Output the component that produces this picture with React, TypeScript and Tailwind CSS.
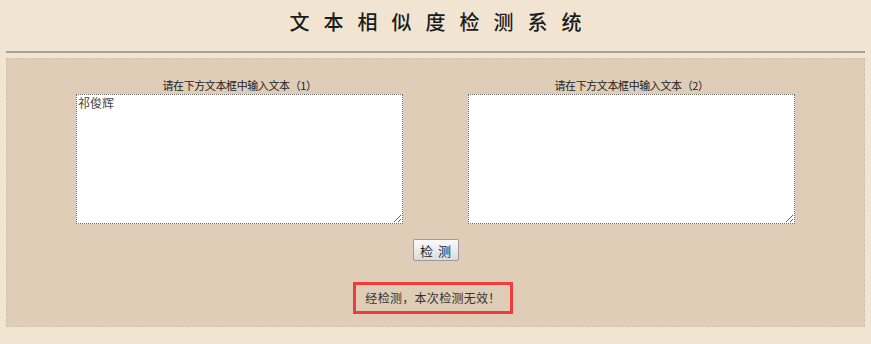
import { useState } from "react";

const cjk = { fontFamily: '"Noto Sans CJK SC", "Liberation Sans", sans-serif' };

export default function App() {
  const [left, setLeft] = useState("祁俊辉");
  const [right, setRight] = useState("");

  return (
    <div className="min-h-screen bg-[#f1e5d1] text-[#333]" style={cjk}>
      {/* header */}
      <div className="pt-[8px] pb-[15px] text-center">
        <h1 className="pl-[14px] text-[20px] leading-[28px] font-medium tracking-[14px] text-[#1c1c1c]">
          文本相似度检测系统
        </h1>
      </div>
      <div className="mx-[6px] h-[2px] bg-[#9ea2a2]" />

      {/* main panel */}
      <div className="mx-[6px] mt-[5px] border border-dashed border-[#d2c2ae] bg-[#dfcdb7] pt-[19px] pb-[12px]">
        <div className="flex justify-center gap-[65px]">
          <TextBox label="请在下方文本框中输入文本（1）" value={left} onChange={setLeft} />
          <TextBox label="请在下方文本框中输入文本（2）" value={right} onChange={setRight} />
        </div>

        <div className="mt-[15px] flex justify-center">
          <button className="h-[22px] w-[46px] rounded-[2px] border border-[#9a9a9a] bg-gradient-to-b from-[#fafafa] to-[#dcdcdc] pl-[5px] text-[13px] leading-none tracking-[5px] text-[#222]">
            检测
          </button>
        </div>

        <div className="mt-[21px] flex justify-center">
          <div className="mr-[5px] border-[3px] border-[#f23b3b] px-[9px] py-[4px] text-[12px] leading-[18px] tracking-[0.3px] text-[#333]">
            经检测，本次检测无效！
          </div>
        </div>
      </div>
    </div>
  );
}

function TextBox({
  label,
  value,
  onChange,
}: {
  label: string;
  value: string;
  onChange: (v: string) => void;
}) {
  return (
    <div className="flex flex-col items-center">
      <div className="text-[11px] leading-[14px] tracking-[-0.4px] text-[#222]">{label}</div>
      <textarea
        value={value}
        onChange={(e) => onChange(e.target.value)}
        className="mt-[2px] h-[130px] w-[327px] border border-dotted border-[#666] bg-white px-[1px] py-0 text-[12px] leading-[15px] text-[#444] outline-none"
      />
    </div>
  );
}
